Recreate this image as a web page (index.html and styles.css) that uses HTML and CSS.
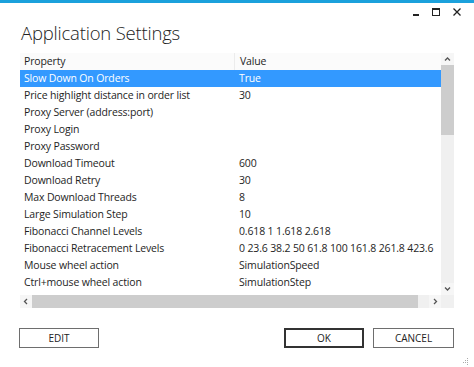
FILE: index.html
```html
<!DOCTYPE html>
<html lang="en">
<head>
    <meta charset="UTF-8">
    <title>Application Settings</title>
    <link rel="stylesheet" href="styles.css">
</head>
<body>
    <div class="window">
        <div class="titlebar">
            <span class="ctl ctl-min"></span>
            <span class="ctl ctl-max"></span>
            <svg class="ctl-close" width="8" height="8" viewBox="0 0 8 8">
                <path d="M0.5 0.5 L7.5 7.5 M7.5 0.5 L0.5 7.5" stroke="#222" stroke-width="1.3" fill="none"/>
            </svg>
        </div>

        <h1 class="title">Application Settings</h1>

        <div class="grid">
            <div class="grid-main">
                <div class="grid-body">
                    <div class="row header">
                        <div class="cell prop">Property</div>
                        <div class="cell val">Value</div>
                    </div>
                    <div class="row selected">
                        <div class="cell prop">Slow Down On Orders</div>
                        <div class="cell val">True</div>
                    </div>
                    <div class="row">
                        <div class="cell prop">Price highlight distance in order list</div>
                        <div class="cell val">30</div>
                    </div>
                    <div class="row">
                        <div class="cell prop">Proxy Server (address:port)</div>
                        <div class="cell val"></div>
                    </div>
                    <div class="row">
                        <div class="cell prop">Proxy Login</div>
                        <div class="cell val"></div>
                    </div>
                    <div class="row">
                        <div class="cell prop">Proxy Password</div>
                        <div class="cell val"></div>
                    </div>
                    <div class="row">
                        <div class="cell prop">Download Timeout</div>
                        <div class="cell val">600</div>
                    </div>
                    <div class="row">
                        <div class="cell prop">Download Retry</div>
                        <div class="cell val">30</div>
                    </div>
                    <div class="row">
                        <div class="cell prop">Max Download Threads</div>
                        <div class="cell val">8</div>
                    </div>
                    <div class="row">
                        <div class="cell prop">Large Simulation Step</div>
                        <div class="cell val">10</div>
                    </div>
                    <div class="row">
                        <div class="cell prop">Fibonacci Channel Levels</div>
                        <div class="cell val">0.618 1 1.618 2.618</div>
                    </div>
                    <div class="row">
                        <div class="cell prop">Fibonacci Retracement Levels</div>
                        <div class="cell val">0 23.6 38.2 50 61.8 100 161.8 261.8 423.6</div>
                    </div>
                    <div class="row">
                        <div class="cell prop">Mouse wheel action</div>
                        <div class="cell val">SimulationSpeed</div>
                    </div>
                    <div class="row">
                        <div class="cell prop">Ctrl+mouse wheel action</div>
                        <div class="cell val">SimulationStep</div>
                    </div>
                </div>
                <div class="vscroll">
                    <svg class="sarrow" width="13" height="12" viewBox="0 0 13 12">
                        <path d="M4 7.5 L6.5 5 L9 7.5" stroke="#555" stroke-width="1.3" fill="none"/>
                    </svg>
                    <div class="vtrack"><div class="vthumb"></div></div>
                    <svg class="sarrow" width="13" height="12" viewBox="0 0 13 12">
                        <path d="M4 4.5 L6.5 7 L9 4.5" stroke="#555" stroke-width="1.3" fill="none"/>
                    </svg>
                </div>
            </div>
            <div class="grid-foot">
                <div class="hscroll">
                    <svg class="sarrow" width="12" height="13" viewBox="0 0 12 13">
                        <path d="M7 4 L4.5 6.5 L7 9" stroke="#555" stroke-width="1.3" fill="none"/>
                    </svg>
                    <div class="hthumb"></div>
                    <svg class="sarrow right" width="12" height="13" viewBox="0 0 12 13">
                        <path d="M5 4 L7.5 6.5 L5 9" stroke="#555" stroke-width="1.3" fill="none"/>
                    </svg>
                </div>
                <div class="corner"></div>
            </div>
        </div>

        <div class="buttons">
            <button class="btn">EDIT</button>
            <div class="spacer"></div>
            <button class="btn default">OK</button>
            <button class="btn">CANCEL</button>
        </div>
        <svg class="grip" width="7" height="7" viewBox="0 0 7 7">
            <rect x="5" y="0" width="1" height="1" fill="#aaa"/>
            <rect x="3" y="2" width="1" height="1" fill="#aaa"/>
            <rect x="5" y="2" width="1" height="1" fill="#aaa"/>
            <rect x="1" y="4" width="1" height="1" fill="#aaa"/>
            <rect x="3" y="4" width="1" height="1" fill="#aaa"/>
            <rect x="5" y="4" width="1" height="1" fill="#aaa"/>
            <rect x="5" y="6" width="1" height="1" fill="#aaa"/>
        </svg>
    </div>
</body>
</html>
```

FILE: styles.css
```css
body {
    margin: 0;
    background: #ffffff;
    font-family: "Open Sans", "Noto Sans", sans-serif;
    color: #1e1e1e;
}
.window {
    width: 474px;
    height: 367px;
    border-top: 3px solid #1ba1dc;
    box-sizing: border-box;
    position: relative;
}
.titlebar {
    display: flex;
    justify-content: flex-end;
    align-items: center;
    gap: 13px;
    height: 18px;
    padding-right: 13px;
}
.ctl-min {
    width: 6px;
    height: 2px;
    background: #222;
    margin-top: 6px;
}
.ctl-max {
    width: 6px;
    height: 5px;
    border: 1px solid #222;
    border-top-width: 2px;
}
.title {
    margin: 0 0 0 21px;
    font-size: 18.5px;
    font-weight: 300;
    line-height: 24px;
    color: #222;
    letter-spacing: -0.2px;
}
.grid {
    margin: 8px 0 0 20px;
    width: 434px;
    font-size: 10.5px;
    letter-spacing: -0.15px;
}
.grid-main {
    display: flex;
    height: 242px;
}
.grid-body {
    flex: 1;
    overflow: hidden;
}
.row {
    display: flex;
    height: 17px;
    line-height: 17px;
    white-space: nowrap;
}
.row.header {
    background: #fbfbfb;
}
.row.header .prop {
    border-right: 1px solid #ececec;
}
.row.selected {
    background: #3399ff;
    color: #ffffff;
}
.cell {
    overflow: hidden;
    padding-left: 4px;
}
.prop {
    width: 210px;
}
.val {
    flex: 1;
    padding-left: 5px;
}
.vscroll {
    width: 13px;
    display: flex;
    flex-direction: column;
    background: #f0f0f0;
}
.sarrow {
    display: block;
    flex: none;
    background: #f6f6f6;
}
.vtrack {
    flex: 1;
}
.vthumb {
    height: 70px;
    background: #cdcdcd;
}
.grid-foot {
    display: flex;
    height: 13px;
}
.hscroll {
    flex: 1;
    display: flex;
    background: #f0f0f0;
}
.hthumb {
    height: 13px;
    width: 386px;
    background: #cdcdcd;
}
.sarrow.right {
    margin-left: auto;
}
.corner {
    width: 13px;
    background: #f0f0f0;
}
.buttons {
    display: flex;
    gap: 9px;
    margin: 20px 20px 0 19px;
}
.spacer {
    flex: 1;
}
.btn {
    width: 80px;
    height: 20px;
    padding: 0;
    font-family: "Open Sans", "Noto Sans", sans-serif;
    font-size: 10px;
    color: #222;
    background: #ffffff;
    border: 1px solid #6e6e6e;
}
.btn.default {
    border: 2px solid #333;
}
.btn:last-child {
    width: 81px;
}
.grip {
    position: absolute;
    right: 5px;
    bottom: 2px;
}
```
